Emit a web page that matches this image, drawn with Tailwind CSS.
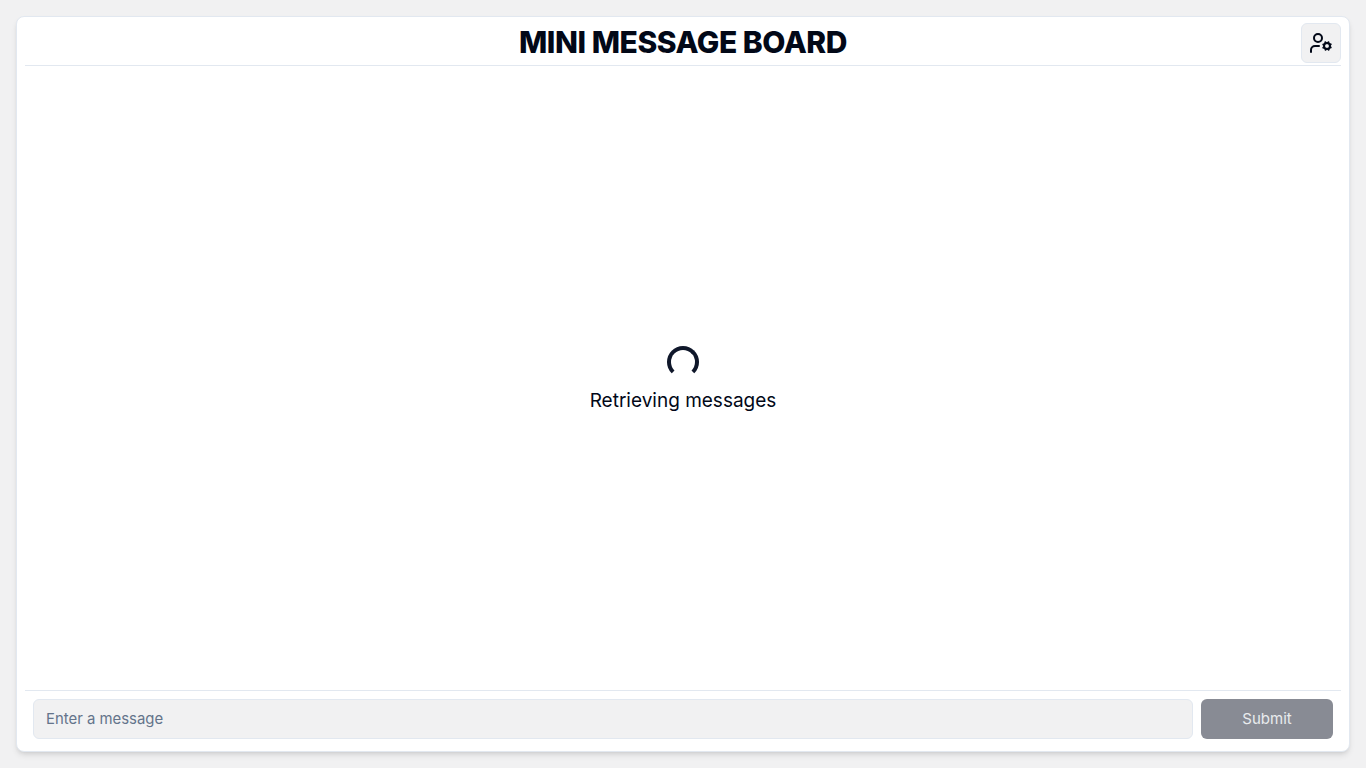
<!DOCTYPE html>
<html lang="en">
<head>
    <meta charset="UTF-8">
    <title>Mini Message Board</title>
    <script src="https://cdn.jsdelivr.net/npm/@tailwindcss/browser@4"></script>
</head>
<body class="h-screen bg-[#f1f1f2] p-4 font-['Inter',sans-serif] text-[#020817]">
    <div class="flex h-[736px] flex-col rounded-lg border border-[#e2e8f0] bg-white px-2 shadow-md">
        <header class="relative flex h-[49px] items-center justify-center border-b border-[#e2e8f0] pt-[2px]">
            <h1 class="text-[30px] leading-9 font-extrabold tracking-[-0.45px]">MINI MESSAGE BOARD</h1>
            <button class="absolute top-[6px] right-0 flex h-10 w-10 items-center justify-center rounded-md border border-[#e2e8f0] bg-[#f1f1f2]">
                <svg xmlns="http://www.w3.org/2000/svg" width="24" height="24" viewBox="0 0 24 24" fill="none" stroke="currentColor" stroke-width="2" stroke-linecap="round" stroke-linejoin="round">
                    <circle cx="18" cy="15" r="3"/>
                    <circle cx="9" cy="7" r="4"/>
                    <path d="M10 15H6a4 4 0 0 0-4 4v2"/>
                    <path d="m21.7 16.4-.9-.3"/>
                    <path d="m15.2 13.9-.9-.3"/>
                    <path d="m16.6 18.7.3-.9"/>
                    <path d="m19.1 12.2.3-.9"/>
                    <path d="m19.6 18.7-.4-1"/>
                    <path d="m16.8 12.3-.4-1"/>
                    <path d="m14.3 16.6 1-.4"/>
                    <path d="m20.7 13.8 1-.4"/>
                </svg>
            </button>
        </header>

        <main class="flex flex-1 flex-col items-center justify-center gap-[9px] pt-[5px]">
            <div class="h-8 w-8 rounded-full border-4 border-[#0f172a] border-b-transparent"></div>
            <p class="text-[19px] leading-7">Retrieving messages</p>
        </main>

        <form class="flex gap-2 border-t border-[#e2e8f0] px-2 pt-2 pb-3">
            <input type="text" placeholder="Enter a message" class="h-10 flex-1 rounded-md border border-[#e2e8f0] bg-[#f1f1f2] px-3 text-[14.9px] placeholder:text-[#64748b]">
            <button type="button" class="h-10 w-[132px] rounded-md bg-[#888b94] text-[15px] font-normal text-[#e9ebee]">Submit</button>
        </form>
    </div>
</body>
</html>
